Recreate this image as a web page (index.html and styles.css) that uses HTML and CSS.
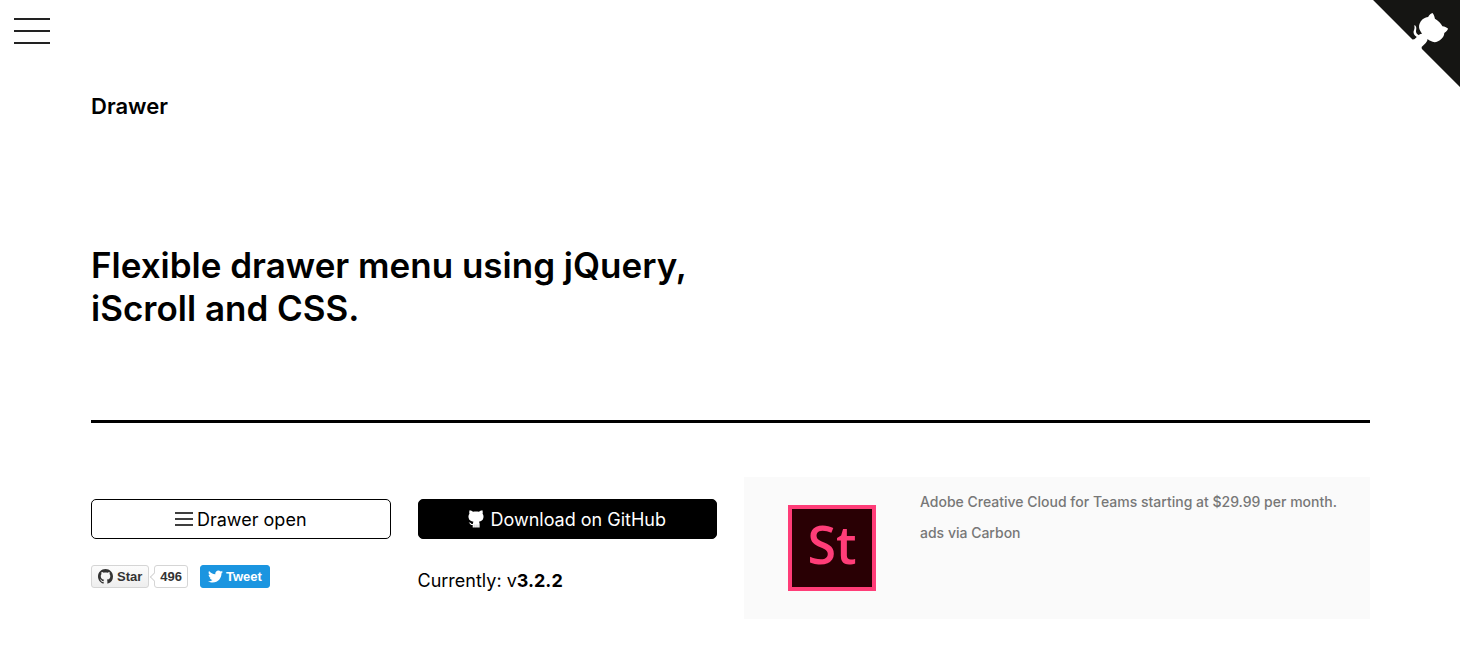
FILE: index.html
```
<!DOCTYPE html>
<html lang="en">
<head>
    <meta charset="UTF-8">
    <meta name="viewport" content="width=device-width, initial-scale=1.0">
    <title>Drawer</title>
    <link rel="stylesheet" href="styles.css">
</head>
<body>
    <button type="button" class="hamburger" aria-label="Toggle navigation">
        <span class="hamburger-line"></span>
        <span class="hamburger-line"></span>
        <span class="hamburger-line"></span>
    </button>

    <!-- GitHub corner -->
    <a href="#" class="github-corner" aria-label="View source on GitHub">
        <svg viewBox="0 3 250 250" aria-hidden="true">
            <path fill="#151513" d="M0,0 L115,115 L130,115 L142,142 L250,250 L250,0 Z"/>
            <path fill="#fff" d="M128.3,109.0 C113.8,99.7 119.0,89.6 119.0,89.6 C122.0,82.7 120.5,78.6 120.5,78.6 C119.2,72.0 123.4,76.3 123.4,76.3 C127.3,80.9 125.5,87.3 125.5,87.3 C122.9,97.6 130.6,101.9 134.4,103.2"/>
            <path fill="#fff" d="M115.0,115.0 C114.9,115.1 118.7,116.5 119.8,115.4 L133.7,101.6 C136.9,99.2 139.9,98.4 142.2,98.6 C133.8,88.0 127.5,74.4 143.8,58.0 C148.5,53.4 154.0,51.2 159.7,51.0 C160.3,49.4 163.2,43.6 171.4,40.1 C171.4,40.1 176.1,42.5 178.8,56.2 C183.1,58.6 187.2,61.8 190.9,65.4 C194.5,69.0 197.7,73.2 200.1,77.6 C213.8,80.2 216.3,84.9 216.3,84.9 C212.7,93.1 206.9,96.0 205.4,96.6 C205.1,102.4 203.0,107.8 198.3,112.5 C181.9,128.9 168.3,122.5 157.7,114.1 C157.9,116.9 156.7,120.9 152.7,124.9 L141.0,136.5 C139.8,137.7 141.6,141.9 141.8,141.8 Z"/>
        </svg>
    </a>

    <main class="container">
        <header class="header">
            <h1 class="brand">Drawer</h1>
            <p class="lead">Flexible drawer menu using jQuery,<br>iScroll and CSS.</p>
        </header>

        <div class="row">
            <div class="col">
                <button type="button" class="btn btn-outline">
                    <svg class="icon-menu" viewBox="0 0 18 14" aria-hidden="true">
                        <path d="M0 1h18M0 7h18M0 13h18" stroke="#000" stroke-width="1.5"/>
                    </svg>
                    Drawer open
                </button>
                <div class="social">
                    <div class="star">
                        <a href="#" class="social-btn star-btn">
                            <svg class="icon-social" viewBox="0 0 16 16" aria-hidden="true">
                                <path fill="#333" d="M8 0C3.58 0 0 3.58 0 8c0 3.54 2.29 6.53 5.47 7.59.4.07.55-.17.55-.38 0-.19-.01-.82-.01-1.49-2.01.37-2.53-.49-2.69-.94-.09-.23-.48-.94-.82-1.13-.28-.15-.68-.52-.01-.53.63-.01 1.08.58 1.23.82.72 1.21 1.87.87 2.33.66.07-.52.28-.87.51-1.07-1.78-.2-3.64-.89-3.64-3.95 0-.87.31-1.59.82-2.15-.08-.2-.36-1.02.08-2.12 0 0 .67-.21 2.2.82.64-.18 1.32-.27 2-.27s1.36.09 2 .27c1.53-1.04 2.2-.82 2.2-.82.44 1.1.16 1.92.08 2.12.51.56.82 1.27.82 2.15 0 3.07-1.87 3.75-3.65 3.95.29.25.54.73.54 1.48 0 1.07-.01 1.93-.01 2.2 0 .21.15.46.55.38A8.01 8.01 0 0 0 16 8c0-4.42-3.58-8-8-8z"/>
                            </svg>
                            Star
                        </a>
                        <a href="#" class="social-btn star-count">496</a>
                    </div>
                    <a href="#" class="social-btn tweet-btn">
                        <svg class="icon-social" viewBox="0 0 24 24" aria-hidden="true">
                            <path fill="#fff" d="M23.954 4.569c-.885.389-1.83.654-2.825.775 1.014-.611 1.794-1.574 2.163-2.723-.951.555-2.005.959-3.127 1.184-.896-.959-2.173-1.559-3.591-1.559-2.717 0-4.92 2.203-4.92 4.917 0 .39.045.765.127 1.124C7.691 8.094 4.066 6.13 1.64 3.161c-.427.722-.666 1.561-.666 2.475 0 1.71.87 3.213 2.188 4.096-.807-.026-1.566-.248-2.228-.616v.061c0 2.385 1.693 4.374 3.946 4.827-.413.111-.849.171-1.296.171-.314 0-.615-.03-.916-.086.631 1.953 2.445 3.377 4.604 3.417-1.68 1.319-3.809 2.105-6.102 2.105-.39 0-.779-.023-1.17-.067 2.189 1.394 4.768 2.209 7.557 2.209 9.054 0 13.999-7.496 13.999-13.986 0-.209 0-.42-.015-.63.961-.689 1.8-1.56 2.46-2.548z"/>
                        </svg>
                        Tweet
                    </a>
                </div>
            </div>

            <div class="col">
                <a href="#" class="btn btn-solid">
                    <svg class="icon-octocat" viewBox="0 0 16 18" aria-hidden="true">
                        <path fill="#fff" d="M1.6.3C3 .4 4.2 1 5 1.7c2-.4 4-.4 6 0C11.8 1 13 .4 14.4.3c.5 1.2.5 2.4.2 3.5.9 1.2 1.1 2.5.8 4-.4 2.6-2.2 3.7-4.5 4 .5.6.7 1.3.7 2v3.7H4.7V15c-1.9.2-2.5-.7-3-1.5-.3-.5-.7-.7-1.2-.9 1.300-.4 2 .1 2.600.9.500.6 1 .6 1.700.4.1-.9.3-1.600.7-2.100C2.900 11.500 1 10.400.6 7.800c-.3-1.500-.1-2.800.8-4-.3-1.100-.3-2.300.2-3.500z"/>
                        <path d="M6.2 14.5v3.500M8.100 14.500v3.500M10 14.500v3.500" stroke="#000" stroke-opacity=".4" stroke-width=".5"/>
                    </svg>
                    Download on GitHub
                </a>
                <p class="version">Currently: v<strong>3.2.2</strong></p>
            </div>

            <aside class="ad">
                <a href="#" class="ad-logo" aria-label="Adobe Stock">St</a>
                <div class="ad-body">
                    <a href="#" class="ad-link">Adobe Creative Cloud for Teams starting at $29.99 per month.</a>
                    <a href="#" class="ad-link">ads via Carbon</a>
                </div>
            </aside>
        </div>
    </main>
</body>
</html>
```
FILE: styles.css
```
* {
    box-sizing: border-box;
}
body {
    margin: 0;
    font-family: Inter, "Liberation Sans", sans-serif;
    font-size: 18px;
    color: #000;
    background-color: #fff;
}
a {
    color: inherit;
    text-decoration: none;
}
h1, p {
    margin: 0;
}

/* Corner controls */
.hamburger {
    position: absolute;
    top: 18px;
    left: 14px;
    display: flex;
    flex-direction: column;
    justify-content: space-between;
    width: 36px;
    height: 26px;
    padding: 0;
    border: 0;
    background: none;
    cursor: pointer;
}
.hamburger-line {
    height: 2px;
    background-color: #222;
}
.github-corner {
    position: absolute;
    top: 0;
    right: 0;
}
.github-corner svg {
    display: block;
    width: 88px;
    height: 88px;
}

/* Header */
.container {
    padding: 92px 90px 38px 91px;
}
.header {
    padding-bottom: 90px;
    border-bottom: 3px solid #000;
}
.brand {
    font-size: 22px;
    line-height: 28px;
    font-weight: 600;
}
.lead {
    margin-top: 124px;
    font-size: 35px;
    line-height: 43px;
    font-weight: 600;
}

/* Columns */
.row {
    display: grid;
    grid-template-columns: repeat(4, 1fr);
    gap: 27px;
    padding-top: 54px;
}
.col {
    padding-top: 22px;
}
.btn {
    display: flex;
    align-items: center;
    justify-content: center;
    width: 100%;
    height: 40px;
    border: 1px solid #000;
    border-radius: 5px;
    font-family: inherit;
    font-size: 18px;
    cursor: pointer;
}
.btn-outline {
    gap: 4px;
    color: #000;
    background-color: #fff;
}
.btn-solid {
    gap: 6px;
    color: #fff;
    background-color: #000;
}
.icon-menu {
    width: 18px;
    height: 14px;
}
.icon-octocat {
    width: 16px;
    height: 18px;
}
.version {
    margin-top: 29px;
    line-height: 26px;
}

/* Social buttons */
.social {
    display: flex;
    gap: 12px;
    margin-top: 26px;
    font-family: "Liberation Sans", Arial, sans-serif;
    font-size: 13px;
    font-weight: bold;
}
.star {
    display: flex;
    gap: 5px;
}
.social-btn {
    display: flex;
    align-items: center;
    gap: 4px;
    height: 23px;
    padding: 0 6px;
    border: 1px solid #d5d5d5;
    border-radius: 3px;
    color: #333;
}
.star-btn {
    background-image: linear-gradient(#fcfcfc, #eee);
}
.star-count {
    position: relative;
    padding: 0 5px;
    background-color: #fff;
}
.star-count::before {
    content: "";
    position: absolute;
    top: 8px;
    left: -4px;
    width: 5px;
    height: 5px;
    border: 1px solid #d5d5d5;
    border-top: 0;
    border-right: 0;
    background-color: #fff;
    transform: rotate(45deg);
}
.tweet-btn {
    gap: 3px;
    padding: 0 7px;
    border-color: #1b95e0;
    color: #fff;
    background-color: #1b95e0;
}
.icon-social {
    width: 15px;
    height: 15px;
}

/* Ad */
.ad {
    grid-column: span 2;
    display: flex;
    gap: 44px;
    min-height: 142px;
    padding: 9px 20px 28px 44px;
    background-color: #fafafa;
}
.ad-logo {
    display: flex;
    flex-shrink: 0;
    align-items: center;
    justify-content: center;
    width: 88px;
    height: 86px;
    margin-top: 19px;
    padding-bottom: 8px;
    border: 4px solid #ff3d78;
    font-family: "Open Sans", sans-serif;
    font-size: 52px;
    line-height: 54px;
    font-weight: 600;
    color: #ff3d78;
    background-color: #290004;
}
.ad-body {
    display: flex;
    flex-direction: column;
}
.ad-link {
    font-size: 14px;
    line-height: 31px;
    font-weight: 500;
    color: #777;
}
```
